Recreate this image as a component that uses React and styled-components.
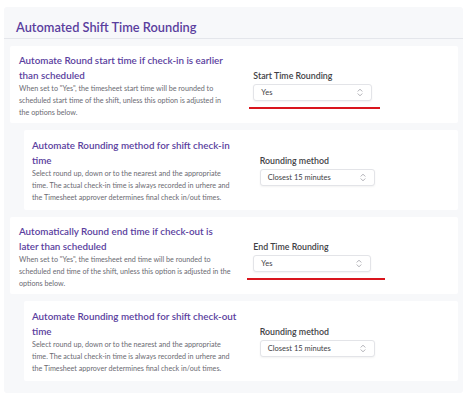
import React from "react";
import styled, { createGlobalStyle } from "styled-components";

const Global = createGlobalStyle`
  html, body { margin: 0; padding: 0; background: #ffffff; }
  body { font-family: Lato, "Open Sans", sans-serif; }
  * { box-sizing: border-box; }
`;

const Page = styled.div`
  width: 474px;
  height: 401px;
  padding: 7px 11px 5px 4px;
`;

const Panel = styled.section`
  background: #f7f8fa;
  border-radius: 3px;
  padding: 0 5px 12px 6px;
  display: flex;
  flex-direction: column;
  gap: 7px;
`;

const Header = styled.h2`
  margin: 0 -5px 0 -6px;
  padding: 14px 12px 4px;
  font-size: 12.8px;
  font-weight: 600;
  color: #5a3e9e;
  border-bottom: 1px solid #e4e6eb;
  line-height: 13px;
`;

const Card = styled.div`
  background: #ffffff;
  margin-left: ${(p) => (p.$indent ? "14px" : "0")};
  padding: ${(p) => (p.$indent ? "8px 8px 6px 8px" : "7px 9px 4px 9px")};
  display: grid;
  grid-template-columns: 54.5% 1fr;
  align-items: center;
  border-radius: 2px;
`;

const TextCol = styled.div`
  display: flex;
  flex-direction: column;
`;

const Title = styled.h3`
  margin: 0;
  font-size: 9.8px;
  font-weight: 600;
  line-height: 15px;
  color: #5a3e9e;
  max-width: 212px;
`;

const Desc = styled.p`
  margin: 0;
  font-size: 7.2px;
  line-height: 12px;
  color: #6b6b73;
  max-width: ${(p) => (p.$indent ? "203px" : "212px")};
`;

const Control = styled.div`
  display: flex;
  flex-direction: column;
  padding-top: ${(p) => (p.$underline ? "8px" : "0")};
`;

const Label = styled.label`
  font-size: 8.8px;
  font-weight: 600;
  color: #3f3f46;
  margin-bottom: 3px;
  line-height: 10px;
`;

const SelectBox = styled.div`
  width: ${(p) => p.$w}px;
  height: 17px;
  border: 1px solid #e3e4e8;
  border-radius: 3px;
  background: #fff;
  box-shadow: 0 1px 2px rgba(0, 0, 0, 0.05);
  display: flex;
  align-items: center;
  justify-content: space-between;
  padding: 0 8px 0 7px;
  font-size: 7.5px;
  color: #3e3e44;
`;

const RedLine = styled.div`
  height: 2px;
  background: #d9151d;
  margin-top: 6px;
  margin-left: ${(p) => p.$ml}px;
  width: ${(p) => p.$w}px;
`;

const Chevrons = () => (
  <svg width="6" height="9" viewBox="0 0 6 9" fill="none" stroke="#9a9aa2" strokeWidth="0.8" strokeLinecap="round" strokeLinejoin="round">
    <path d="M1 3.2 L3 1.2 L5 3.2" />
    <path d="M1 5.8 L3 7.8 L5 5.8" />
  </svg>
);

const Select = ({ value, w }) => (
  <SelectBox $w={w}>
    <span>{value}</span>
    <Chevrons />
  </SelectBox>
);

const rows = [
  {
    indent: false,
    title: "Automate Round start time if check-in is earlier than scheduled",
    desc: "When set to \"Yes\", the timesheet start time will be rounded to scheduled start time of the shift, unless this option is adjusted in the options below.",
    label: "Start Time Rounding",
    value: "Yes",
    w: 119,
    line: { ml: -4, w: 131 },
  },
  {
    indent: true,
    title: "Automate Rounding method for shift check-in time",
    desc: "Select round up, down or to the nearest and the appropriate time. The actual check-in time is always recorded in urhere and the Timesheet approver determines final check in/out times.",
    label: "Rounding method",
    value: "Closest 15 minutes",
    w: 115,
  },
  {
    indent: false,
    title: "Automatically Round end time if check-out is later than scheduled",
    desc: "When set to \"Yes\", the timesheet end time will be rounded to scheduled end time of the shift, unless this option is adjusted in the options below.",
    label: "End Time Rounding",
    value: "Yes",
    w: 118,
    line: { ml: -6, w: 138 },
  },
  {
    indent: true,
    title: "Automate Rounding method for shift check-out time",
    desc: "Select round up, down or to the nearest and the appropriate time. The actual check-in time is always recorded in urhere and the Timesheet approver determines final check in/out times.",
    label: "Rounding method",
    value: "Closest 15 minutes",
    w: 115,
  },
];

export default function App() {
  return (
    <Page>
      <Global />
      <Panel>
        <Header>Automated Shift Time Rounding</Header>
        {rows.map((r, i) => (
          <Card key={i} $indent={r.indent}>
            <TextCol>
              <Title>{r.title}</Title>
              <Desc $indent={r.indent}>{r.desc}</Desc>
            </TextCol>
            <Control $underline={!!r.line}>
              <Label>{r.label}</Label>
              <Select value={r.value} w={r.w} />
              {r.line && <RedLine $ml={r.line.ml} $w={r.line.w} />}
            </Control>
          </Card>
        ))}
      </Panel>
    </Page>
  );
}
